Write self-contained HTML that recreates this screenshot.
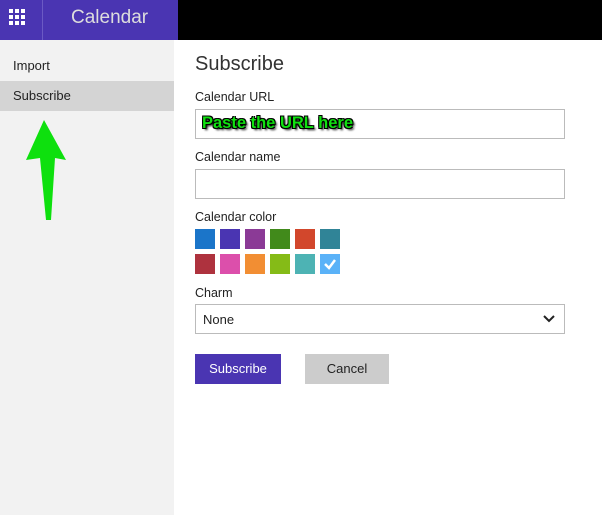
<!DOCTYPE html>
<html><head><style>
*{box-sizing:border-box;margin:0;padding:0}
body{width:602px;height:515px;background:#fff;font-family:"Liberation Sans",sans-serif;position:relative;overflow:hidden;color:#222}
.a{position:absolute}
.hdr{left:0;top:0;width:602px;height:40px;background:#000}
.pur{left:0;top:0;width:178px;height:40px;background:#4a35b2}
.div{left:42px;top:0;width:1px;height:40px;background:#6b5ac4}
.side{left:0;top:40px;width:174px;height:475px;background:#f2f2f2}
.sel{left:0;top:81px;width:174px;height:30px;background:#d4d4d4}
.lbl{font-size:12.5px;color:#222}
.box{border:1px solid #bbb;background:#fff}
.sw{width:20px;height:20px}
</style></head><body>
<div class="a hdr"></div><div class="a pur"></div><div class="a div"></div>
<svg class="a" style="left:9px;top:9px" width="16" height="16">
<g fill="#fff"><rect x="0" y="0" width="4" height="4"/><rect x="6" y="0" width="4" height="4"/><rect x="12" y="0" width="4" height="4"/><rect x="0" y="6" width="4" height="4"/><rect x="6" y="6" width="4" height="4"/><rect x="12" y="6" width="4" height="4"/><rect x="0" y="12" width="4" height="4"/><rect x="6" y="12" width="4" height="4"/><rect x="12" y="12" width="4" height="4"/></g></svg>
<div class="a" style="left:71px;top:7px;font-size:19px;color:#ddd;font-weight:300">Calendar</div>
<div class="a side"></div><div class="a sel"></div>
<div class="a" style="left:13px;top:58px;font-size:13px">Import</div>
<div class="a" style="left:13px;top:88px;font-size:13px">Subscribe</div>
<svg class="a" style="left:24px;top:118px" width="46" height="105"><path d="M20 2 L42 42 L31 40 L27 102 L22 102 L16 40 L2 42 Z" fill="#0ee00e"/></svg>
<div class="a" style="left:195px;top:53px;font-size:20px;color:#333">Subscribe</div>
<div class="a lbl" style="left:195px;top:90px">Calendar URL</div>
<div class="a box" style="left:195px;top:109px;width:370px;height:30px"></div>
<div class="a" style="left:202px;top:114px;font-size:16.5px;font-weight:bold;color:#11e011;text-shadow:1px 1px 0 #000,-1px -1px 0 #000,1px -1px 0 #000,-1px 1px 0 #000,2px 2px 2px #000">Paste the URL here</div>
<div class="a lbl" style="left:195px;top:150px">Calendar name</div>
<div class="a box" style="left:195px;top:169px;width:370px;height:30px"></div>
<div class="a lbl" style="left:195px;top:210px">Calendar color</div>
<div class="a sw" style="left:195px;top:229px;background:#1b75c9"></div>
<div class="a sw" style="left:220px;top:229px;background:#4a35b2"></div>
<div class="a sw" style="left:245px;top:229px;background:#8b3a96"></div>
<div class="a sw" style="left:270px;top:229px;background:#418a1b"></div>
<div class="a sw" style="left:295px;top:229px;background:#d2472c"></div>
<div class="a sw" style="left:320px;top:229px;background:#308497"></div>
<div class="a sw" style="left:195px;top:254px;background:#ae323e"></div>
<div class="a sw" style="left:220px;top:254px;background:#dc4fab"></div>
<div class="a sw" style="left:245px;top:254px;background:#f28e33"></div>
<div class="a sw" style="left:270px;top:254px;background:#85bb17"></div>
<div class="a sw" style="left:295px;top:254px;background:#4db3b4"></div>
<div class="a sw" style="left:320px;top:254px;background:#5ab2f8"></div>
<svg class="a" style="left:320px;top:254px" width="20" height="20"><path d="M5 10 L9 14 L15 6" stroke="#fff" stroke-width="2.5" fill="none"/></svg>
<div class="a lbl" style="left:195px;top:286px">Charm</div>
<div class="a box" style="left:195px;top:304px;width:370px;height:30px"></div>
<div class="a" style="left:203px;top:312px;font-size:13px">None</div>
<svg class="a" style="left:543px;top:314px" width="12" height="10"><path d="M1 2 L6 7 L11 2" stroke="#222" stroke-width="2" fill="none"/></svg>
<div class="a" style="left:195px;top:354px;width:86px;height:30px;background:#4a35b2;color:#fff;font-size:13px;text-align:center;line-height:30px">Subscribe</div>
<div class="a" style="left:305px;top:354px;width:84px;height:30px;background:#ccc;color:#222;font-size:13px;text-align:center;line-height:30px">Cancel</div>
</body></html>
